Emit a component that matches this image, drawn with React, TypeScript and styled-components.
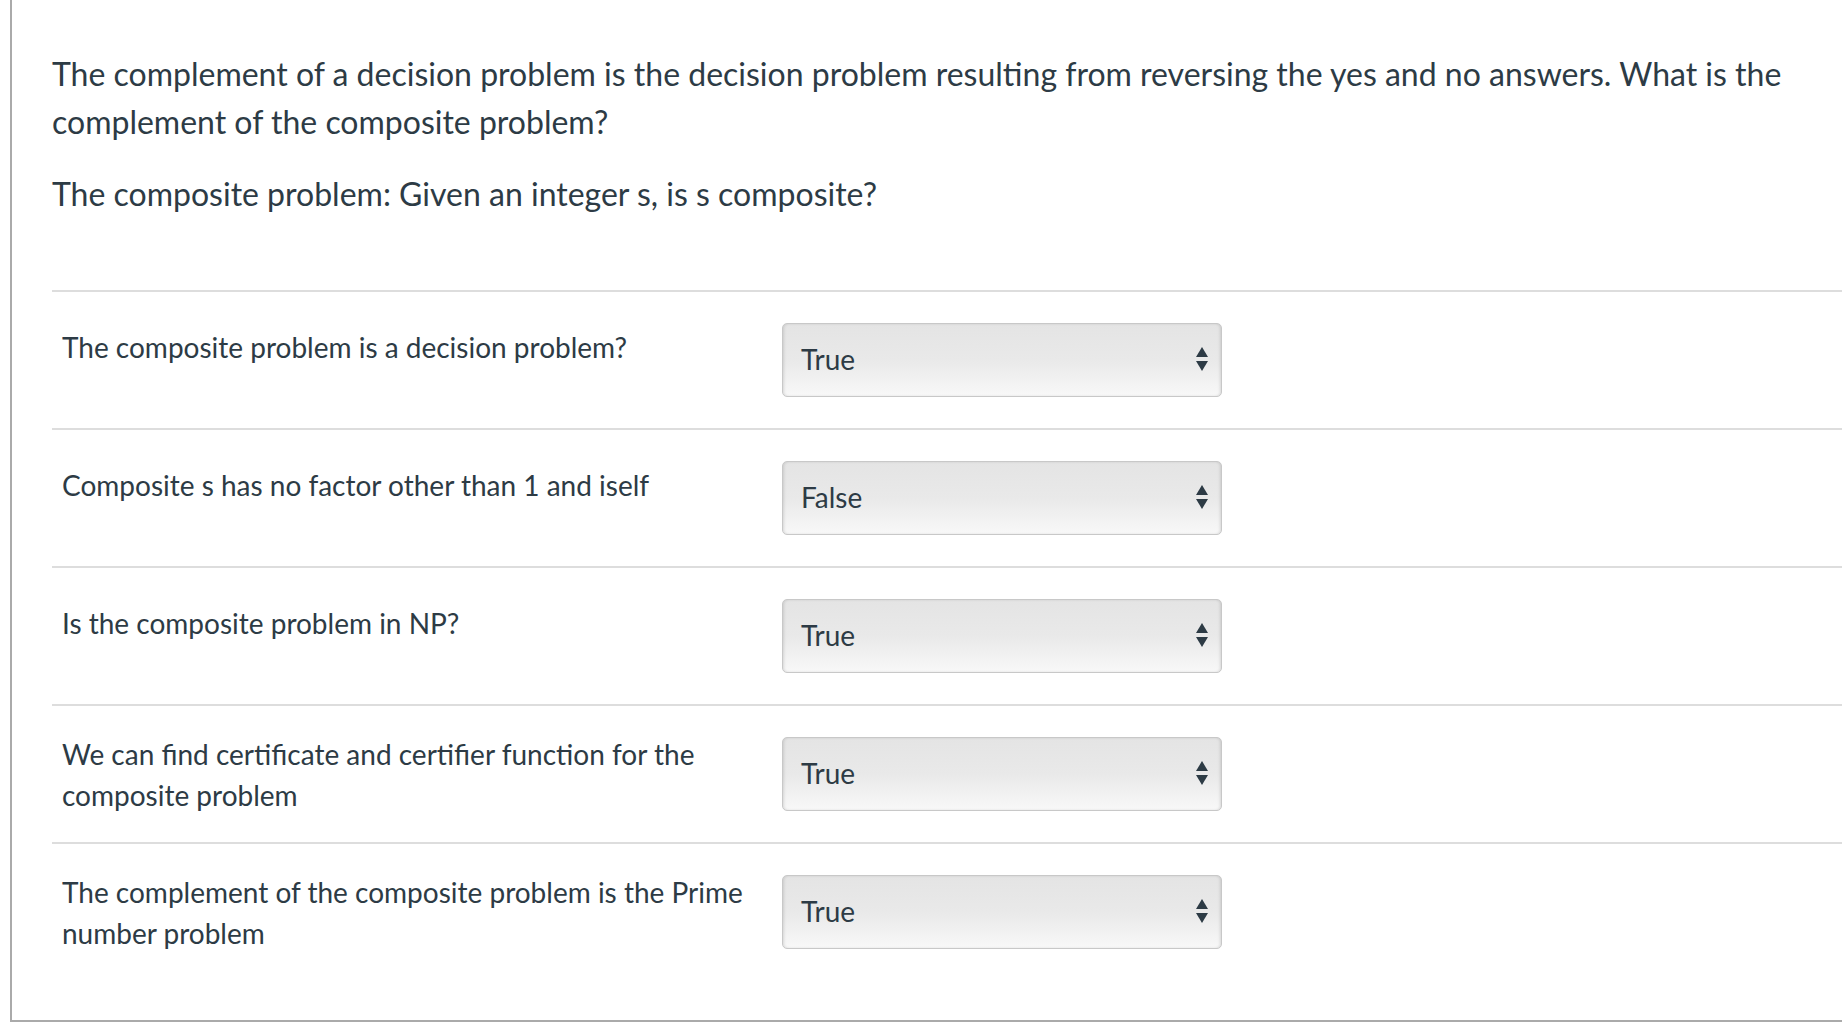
import styled, { createGlobalStyle } from 'styled-components';

const GlobalStyle = createGlobalStyle`
  html, body {
    margin: 0;
    padding: 0;
    background: #fff;
  }
  body {
    font-family: Lato, 'Noto Sans', sans-serif;
    color: #2d3b45;
    overflow: hidden;
  }
`;

const Frame = styled.div`
  margin-left: 10px;
  border-left: 2px solid #aaa;
  border-bottom: 2px solid #aaa;
  padding: 50px 0 40px 40px;
`;

const Question = styled.div`
  display: flex;
  flex-direction: column;
  gap: 24px;
`;

const Para = styled.p`
  margin: 0;
  font-size: 32px;
  line-height: 48px;
`;

const AnswerList = styled.div`
  margin-top: 72px;
`;

const Row = styled.div`
  display: grid;
  grid-template-columns: 720px 440px;
  grid-template-rows: 74px;
  align-items: start;
  border-top: 2px solid #ddd;
  padding: 31px 0 31px 10px;
`;

const Label = styled.div<{ $lines: number }>`
  margin-top: ${(p) => (p.$lines > 1 ? '-3px' : '4px')};
  padding-right: 20px;
  font-size: 28px;
  line-height: 41px;
`;

const SelectBox = styled.div`
  box-sizing: border-box;
  width: 440px;
  height: 74px;
  display: flex;
  align-items: center;
  justify-content: space-between;
  padding: 0 13px 2px 18px;
  border: 1px solid #c8c8c8;
  border-radius: 5px;
  background: linear-gradient(180deg, #e4e4e4 0%, #e9e9e9 50%, #f8f8f8 100%);
  box-shadow: inset 2px 0 3px -1px rgba(0, 0, 0, 0.12), inset -2px 0 3px -1px rgba(0, 0, 0, 0.12);
  font-size: 28px;
  color: #2d3b45;
`;

const Arrows = () => (
  <svg width="12" height="25" viewBox="0 0 12 25" fill="#2d3b45">
    <polygon points="6,0 12,10 0,10" />
    <polygon points="0,14 12,14 6,24" />
  </svg>
);

const rows = [
  { label: 'The composite problem is a decision problem?', value: 'True', lines: 1 },
  { label: 'Composite s has no factor other than 1 and iself', value: 'False', lines: 1 },
  { label: 'Is the composite problem in NP?', value: 'True', lines: 1 },
  { label: 'We can find certificate and certifier function for the composite problem', value: 'True', lines: 2 },
  { label: 'The complement of the composite problem is the Prime number problem', value: 'True', lines: 2 },
];

export default function App() {
  return (
    <>
      <GlobalStyle />
      <Frame>
        <Question>
          <Para>
            The complement of a decision problem is the decision problem resulting from reversing the yes and no
            answers. What is the complement of the composite problem?
          </Para>
          <Para>The composite problem: Given an integer s, is s composite?</Para>
        </Question>
        <AnswerList>
          {rows.map((r) => (
            <Row key={r.label}>
              <Label $lines={r.lines}>{r.label}</Label>
              <SelectBox>
                <span>{r.value}</span>
                <Arrows />
              </SelectBox>
            </Row>
          ))}
        </AnswerList>
      </Frame>
    </>
  );
}
